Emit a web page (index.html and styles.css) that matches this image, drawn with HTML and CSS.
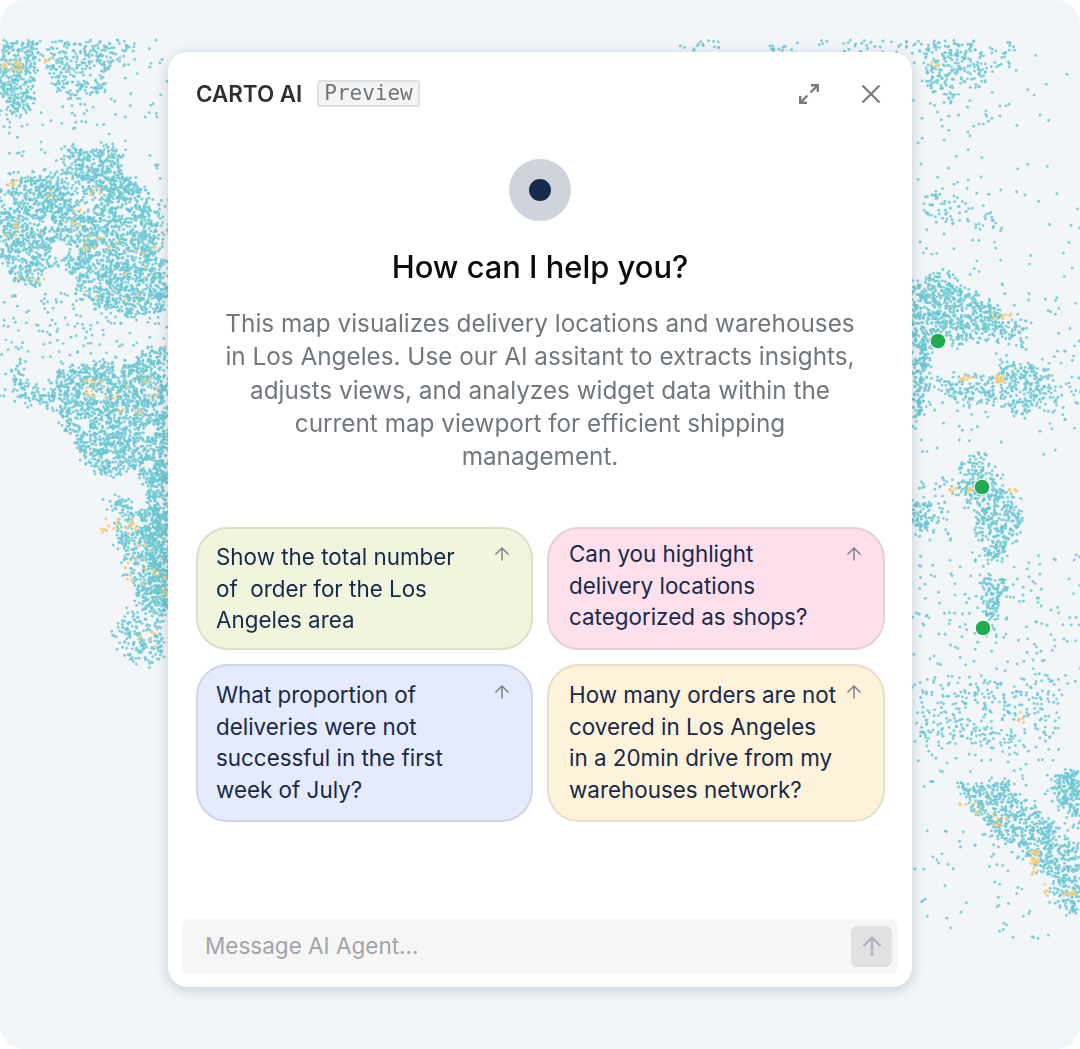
FILE: index.html
```html
<!DOCTYPE html>
<html lang="en">
<head>
<meta charset="utf-8">
<title>CARTO AI</title>
<link rel="stylesheet" href="styles.css">
</head>
<body>
<main class="stage">
  <canvas id="map" class="map" width="1080" height="1049"></canvas>
  <section class="panel">
    <header class="panel-head">
      <div class="brand">
        <span class="brand-name">CARTO AI</span>
        <span class="badge">Preview</span>
      </div>
      <div class="head-actions">
        <svg width="24" height="24" viewBox="0 0 24 24" fill="none" stroke="#777c80" stroke-width="2.4"><path d="M13.5 10.5L20 4M14 3.2h6.8V10M10.5 13.5L4 20M3.2 14v6.8H10"/></svg>
        <svg width="24" height="24" viewBox="0 0 24 24" fill="none" stroke="#777c80" stroke-width="2.2"><path d="M3.5 3.5l17 17M20.5 3.5l-17 17"/></svg>
      </div>
    </header>
    <div class="intro">
      <div class="orb"><span class="orb-dot"></span></div>
      <h1 class="title">How can I help you?</h1>
      <p class="lead">This map visualizes delivery locations and warehouses in Los Angeles. Use our AI assitant to extracts insights, adjusts views, and analyzes widget data within the current map viewport for efficient shipping management.</p>
    </div>
    <div class="cards">
      <button class="card card-green"><span class="card-text">Show the total number<br>of&nbsp; order for the Los<br>Angeles area</span><svg class="card-arrow" width="16" height="16" viewBox="0 0 16 16" fill="none" stroke="#7d8288" stroke-width="1.5"><path d="M8 14.5V2M1.5 8.5L8 2l6.5 6.5"/></svg></button>
      <button class="card card-pink"><span class="card-text">Can you highlight<br>delivery locations<br>categorized as shops?</span><svg class="card-arrow" width="16" height="16" viewBox="0 0 16 16" fill="none" stroke="#7d8288" stroke-width="1.5"><path d="M8 14.5V2M1.5 8.5L8 2l6.5 6.5"/></svg></button>
      <button class="card card-blue"><span class="card-text">What proportion of<br>deliveries were not<br>successful in the first<br>week of July?</span><svg class="card-arrow" width="16" height="16" viewBox="0 0 16 16" fill="none" stroke="#7d8288" stroke-width="1.5"><path d="M8 14.5V2M1.5 8.5L8 2l6.5 6.5"/></svg></button>
      <button class="card card-amber"><span class="card-text">How many orders are not<br>covered in Los Angeles<br>in a 20min drive from my<br>warehouses network?</span><svg class="card-arrow" width="16" height="16" viewBox="0 0 16 16" fill="none" stroke="#7d8288" stroke-width="1.5"><path d="M8 14.5V2M1.5 8.5L8 2l6.5 6.5"/></svg></button>
    </div>
    <div class="composer">
      <span class="placeholder">Message AI Agent...</span>
      <span class="send"><svg width="24" height="24" viewBox="0 0 24 24" fill="none" stroke="#b2b4b7" stroke-width="2.4"><path d="M12 22V4M3.5 12L12 3.5l8.5 8.5"/></svg></span>
    </div>
  </section>
</main>
<script src="map.js"></script>
</body>
</html>
```

FILE: styles.css
```css
* { box-sizing: border-box; }
html, body { margin: 0; padding: 0; background: #fff; }
body { width: 1080px; height: 1049px; overflow: hidden; font-family: Inter, "Noto Sans", sans-serif; }
.stage { position: relative; width: 1080px; height: 1049px; background: #f2f6f9; border-radius: 24px; overflow: hidden; display: flex; flex-direction: column; align-items: center; padding-top: 52px; }
.map { position: absolute; left: 0; top: 0; }
.panel { position: relative; width: 744px; height: 935px; background: #fff; border-radius: 20px; box-shadow: 0 3px 14px rgba(30, 45, 70, .2); display: flex; flex-direction: column; padding: 0 14px 14px; }
.panel-head { display: flex; align-items: center; justify-content: space-between; height: 83px; padding: 0 0 0 14px; }
.brand { display: flex; align-items: center; gap: 15px; }
.brand-name { font-size: 22.4px; font-weight: 600; color: #2c3032; }
.badge { font-family: "DejaVu Sans Mono", "Liberation Mono", monospace; font-size: 21px; line-height: 23px; height: 27px; padding: 0 5px; color: #70757a; background: #f4f4f4; border: 2px solid #dfe0e1; border-radius: 3px; }
.head-actions { display: flex; align-items: center; gap: 38px; padding-right: 15px; }
.intro { display: flex; flex-direction: column; align-items: center; padding-top: 24px; }
.orb { width: 62px; height: 62px; border-radius: 50%; background: #cfd3da; display: flex; align-items: center; justify-content: center; }
.orb-dot { width: 22px; height: 22px; border-radius: 50%; background: #162a4c; }
.title { margin: 26px 0 0; font-size: 30.9px; line-height: 40px; font-weight: 500; color: #0b0b0b; }
.lead { margin: 20px 0 0; width: 650px; font-size: 24.3px; line-height: 33.3px; font-weight: 400; color: #71777d; text-align: center; }
.cards { display: grid; grid-template-columns: 337px 338px; grid-template-rows: 123px 158px; gap: 14px; padding-left: 14px; margin-top: 54px; }
.card { display: flex; justify-content: space-between; align-items: flex-start; padding: 12px 21px 0 18px; border-radius: 32px; border: 2px solid; font-family: inherit; font-size: 22.4px; line-height: 31.4px; color: #18294a; text-align: left; }
.card-arrow { flex: none; margin-top: 5px; }
.card-green { background: #f1f5dd; border-color: #dcdfc8; }
.card-pink { background: #fde0ec; border-color: #e7cfda; padding-top: 9px; padding-left: 20px; }
.card-pink .card-arrow { margin-top: 8px; }
.card-blue { background: #e6ebfb; border-color: #d0d6e8; padding-top: 13px; }
.card-amber { background: #fdf2da; border-color: #e8dfcb; padding-top: 13px; padding-left: 20px; }
.composer { margin-top: auto; height: 54px; background: #f6f6f6; border-radius: 6px; display: flex; align-items: center; justify-content: space-between; padding: 0 6px 0 23px; }
.placeholder { font-size: 22.5px; color: #a2a4a7; margin-bottom: 2px; }
.send { width: 41px; height: 41px; border-radius: 6px; background: #e0e1e3; display: flex; align-items: center; justify-content: center; }
```

FILE: map.js
```js
(function () {
  var seed = 20240617;
  function rnd() {
    seed = (seed * 1664525 + 1013904223) >>> 0;
    return seed / 4294967296;
  }
  function jitter(size) {
    return (rnd() + rnd() + rnd() - 1.5) * size;
  }
  var ctx = document.getElementById('map').getContext('2d');
  var TEAL = 'rgba(108,200,210,.85)';
  var AMBER = 'rgba(250,205,125,.95)';
  function dot(x, y, color, r) {
    if (y < 40 || y > 948) return;
    ctx.fillStyle = color;
    ctx.beginPath();
    ctx.arc(x, y, r, 0, Math.PI * 2);
    ctx.fill();
  }
  function inside(p, x, y) {
    var hit = false;
    for (var i = 0, j = p.length - 1; i < p.length; j = i++) {
      if ((p[i][1] > y) !== (p[j][1] > y) &&
          x < (p[j][0] - p[i][0]) * (y - p[i][1]) / (p[j][1] - p[i][1]) + p[i][0]) hit = !hit;
    }
    return hit;
  }
  // Blank patches of the map inside otherwise dense areas: [x, y, radius]
  var holes = [[60, 250, 9], [55, 277, 11], [68, 283, 9], [8, 200, 6], [48, 222, 5], [85, 425, 5], [100, 397, 5], [150, 430, 6], [148, 465, 5], [118, 365, 4], [88, 137, 13]];
  function inHole(x, y) {
    return holes.some(function (h) {
      var dx = x - h[0], dy = y - h[1];
      return dx * dx + dy * dy < h[2] * h[2];
    });
  }
  function fill(p, n, color, r, soft) {
    var xs = p.map(function (q) { return q[0]; }), ys = p.map(function (q) { return q[1]; });
    var x0 = Math.min.apply(null, xs), x1 = Math.max.apply(null, xs);
    var y0 = Math.min.apply(null, ys), y1 = Math.max.apply(null, ys);
    var placed = 0, tries = 0;
    while (placed < n && tries < n * 60) {
      tries++;
      var x = x0 + rnd() * (x1 - x0), y = y0 + rnd() * (y1 - y0);
      if (inside(p, x, y)) {
        var px = x + jitter(soft), py = y + jitter(soft);
        if (!inHole(px, py)) {
          dot(px, py, color, r);
          placed++;
        }
      }
    }
  }
  function box(x0, y0, x1, y1) {
    return [[x0, y0], [x1, y0], [x1, y1], [x0, y1]];
  }
  // [outline, dots]
  var land = [
    // north-west
    [[[0, 40], [40, 40], [35, 80], [28, 112], [8, 118], [0, 100]], 330],
    [[[50, 42], [135, 42], [115, 62], [105, 90], [75, 100], [50, 85]], 260],
    [box(0, 40, 168, 130), 110],
    [box(0, 130, 168, 175), 35],
    // central west
    [[[0, 195], [12, 175], [60, 178], [70, 210], [65, 262], [40, 285], [18, 285], [0, 262]], 760],
    [[[65, 150], [115, 145], [125, 175], [148, 190], [115, 205], [85, 192]], 450],
    [[[72, 220], [110, 195], [130, 240], [168, 268], [168, 312], [130, 315], [100, 308], [78, 292], [62, 265]], 1100],
    [[[40, 170], [70, 170], [85, 200], [70, 230], [40, 220]], 180],
    [[[112, 198], [150, 195], [160, 265], [130, 245]], 210],
    [box(140, 200, 168, 265), 70],
    [box(0, 290, 168, 362), 150],
    // south-west
    [[[50, 395], [55, 372], [90, 365], [120, 362], [168, 345], [168, 480], [145, 480], [138, 468], [100, 475], [85, 460], [60, 420]], 1750],
    [[[10, 370], [25, 368], [26, 392], [16, 385]], 35],
    [[[10, 392], [45, 386], [52, 402], [22, 405]], 60],
    [box(0, 385, 6, 400), 3],
    [[[145, 470], [168, 470], [168, 620], [150, 590]], 420],
    [[[109, 499], [128, 499], [128, 509], [112, 509]], 45],
    [[[114, 522], [160, 505], [168, 520], [168, 615], [138, 610], [135, 582], [127, 565]], 560],
    [[[112, 635], [125, 614], [165, 620], [165, 663], [127, 666]], 170],
    // north-east
    [[[920, 42], [975, 42], [970, 85], [950, 102], [925, 85]], 210],
    [[[975, 40], [1022, 40], [1000, 70], [975, 90]], 60],
    [box(912, 85, 1010, 130), 30],
    [[[686, 40], [720, 40], [720, 52], [686, 52]], 18],
    [[[770, 40], [915, 40], [915, 52], [770, 52]], 50],
    [box(1015, 60, 1080, 280), 25],
    [box(915, 130, 1000, 280), 55],
    [[[925, 192], [1000, 215], [1000, 235], [925, 222]], 60],
    // east
    [[[912, 280], [945, 272], [1000, 310], [1010, 335], [960, 345], [945, 330], [912, 360]], 700],
    [[[1000, 320], [1030, 320], [1025, 345], [1005, 345]], 30],
    [box(1000, 270, 1080, 360), 40],
    [[[912, 340], [930, 345], [925, 420], [912, 425]], 170],
    [[[995, 360], [1050, 370], [1050, 395], [1020, 420], [1000, 400]], 230],
    [[[930, 380], [1000, 372], [995, 400], [960, 405]], 130],
    [box(1040, 350, 1080, 440), 40],
    [box(915, 400, 1080, 460), 35],
    [[[950, 482], [980, 450], [1000, 480], [1025, 520], [1000, 560], [985, 560], [975, 510]], 470],
    [[[915, 480], [950, 480], [950, 540], [915, 540]], 55],
    [[[912, 500], [935, 505], [930, 535], [912, 538]], 70],
    [[[985, 574], [1008, 585], [990, 622], [985, 610]], 110],
    [box(915, 555, 1080, 680), 170],
    // south-east
    [[[915, 680], [1065, 680], [1060, 730], [1015, 750], [915, 740]], 310],
    [box(915, 730, 1060, 790), 70],
    [[[955, 783], [1005, 783], [1035, 810], [1080, 848], [1080, 918], [1060, 905], [1042, 870], [1010, 845], [980, 820]], 800],
    [[[1055, 775], [1080, 770], [1080, 825], [1058, 800]], 190],
    [box(920, 825, 1030, 925), 48],
    [box(1000, 900, 1050, 945), 12]
  ];
  land.forEach(function (l) { fill(l[0], l[1], TEAL, 1.45, 7); });
  // Amber dots: [x, y, half width, half height, dots]
  var amber = [
    [12, 66, 10, 5, 18], [48, 60, 4, 4, 4], [12, 184, 6, 4, 6], [50, 195, 4, 4, 3], [14, 228, 8, 8, 8], [78, 218, 6, 14, 6],
    [95, 192, 5, 5, 5], [92, 240, 8, 10, 8], [120, 270, 40, 30, 14], [30, 280, 15, 6, 5], [95, 390, 12, 10, 14], [135, 395, 25, 30, 16],
    [125, 525, 25, 8, 20], [145, 565, 20, 25, 14], [160, 580, 8, 15, 8], [145, 640, 10, 8, 6],
    [935, 65, 5, 4, 4], [1000, 378, 5, 5, 18], [968, 378, 8, 2, 8], [1002, 316, 10, 3, 10], [960, 490, 12, 2, 12], [1013, 491, 4, 2, 6],
    [1022, 718, 5, 6, 6], [1000, 820, 8, 6, 8], [970, 810, 12, 8, 8], [1035, 862, 4, 14, 26], [1045, 890, 4, 6, 5], [1072, 893, 8, 2, 10]
  ];
  amber.forEach(function (c) {
    fill(box(c[0] - c[2], c[1] - c[3], c[0] + c[2], c[1] + c[3]), c[4], AMBER, 1.55, 0);
  });
  [[938, 341], [982, 487], [983, 628]].forEach(function (p) {
    dot(p[0], p[1], 'rgba(255,255,255,.85)', 8.4);
    dot(p[0], p[1], '#1fab50', 7.3);
  });
})();
```
